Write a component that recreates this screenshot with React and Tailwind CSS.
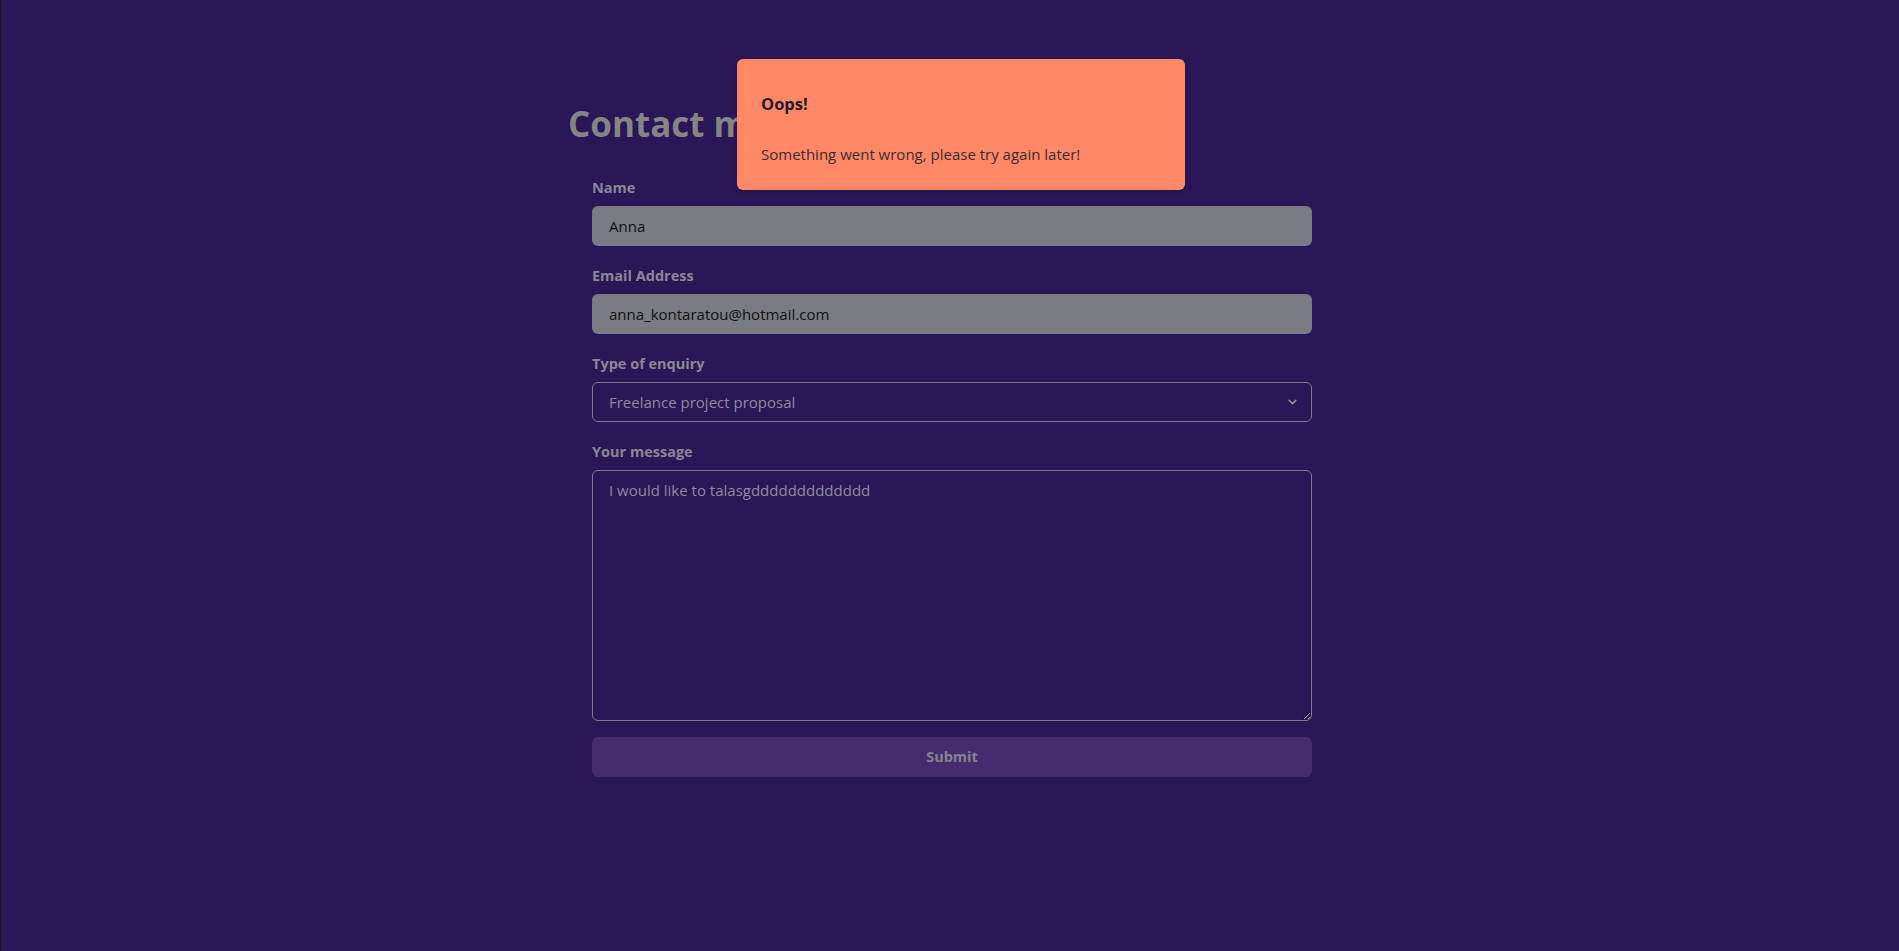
import { useState } from 'react'

const font = { fontFamily: '"Open Sans", "Noto Sans", sans-serif' }

function Toast({ title, message }) {
  return (
    <div className="absolute left-[736px] top-[59px] w-[448px] h-[131px] rounded-md bg-[#ff8966] px-6 pt-[33px] shadow-md">
      <p className="text-[16.5px] font-bold text-[#1e1b2e] leading-6">{title}</p>
      <p className="mt-[26px] text-[15px] text-[#3b2b33] leading-6">{message}</p>
    </div>
  )
}

function Field({ label, children }) {
  return (
    <div className="flex flex-col">
      <label className="mb-2 text-[14.5px] font-bold leading-5 text-[#8b8795]">{label}</label>
      {children}
    </div>
  )
}

export default function App() {
  const [name, setName] = useState('Anna')
  const [email, setEmail] = useState('anna_kontaratou@hotmail.com')
  const [kind, setKind] = useState('freelance')
  const [msg, setMsg] = useState('I would like to talasgddddddddddddd')

  return (
    <div className="relative min-h-[951px] bg-[#2a1758] border-l border-[#15121c]" style={font}>
      <div className="mx-auto w-[772px] pl-1 pt-[104px]">
        <h1 className="text-[35px] font-bold leading-10 text-[#858585] mb-[34px]">Contact me</h1>

        <form className="px-6 flex flex-col gap-5" onSubmit={e => e.preventDefault()}>
          <Field label="Name">
            <input
              value={name}
              onChange={e => setName(e.target.value)}
              className="h-10 rounded-md bg-[#7a7c83] px-[17px] text-[15px] text-[#111] outline-none"
            />
          </Field>

          <Field label="Email Address">
            <input
              value={email}
              onChange={e => setEmail(e.target.value)}
              className="h-10 rounded-md bg-[#7a7c83] px-[17px] text-[15px] text-[#111] outline-none"
            />
          </Field>

          <Field label="Type of enquiry">
            <div className="relative">
              <select
                value={kind}
                onChange={e => setKind(e.target.value)}
                className="h-10 w-full appearance-none rounded-md border border-[#7f7c8c] bg-transparent px-4 text-[15px] text-[#8f8c9c] outline-none"
              >
                <option value="freelance">Freelance project proposal</option>
                <option value="job">Job offer</option>
                <option value="other">Other</option>
              </select>
              {/* chevron */}
              <svg className="pointer-events-none absolute right-[14px] top-1/2 -translate-y-1/2" width="11" height="11" viewBox="0 0 10 10" fill="none">
                <path d="M2 3.5 5 6.5 8 3.5" stroke="#8f8c9c" strokeWidth="1.4" strokeLinecap="round" strokeLinejoin="round" />
              </svg>
            </div>
          </Field>

          <Field label="Your message">
            <textarea
              value={msg}
              onChange={e => setMsg(e.target.value)}
              spellCheck={false}
              className="h-[251px] resize-y rounded-md border border-[#7f7c8c] bg-transparent px-4 py-2 text-[15px] text-[#8f8c9c] outline-none"
            />
          </Field>

          <button
            type="submit"
            className="-mt-[4px] h-10 rounded-md bg-[#432d6e] text-[14.5px] font-bold text-[#85828f]"
          >
            Submit
          </button>
        </form>
      </div>

      <Toast title="Oops!" message="Something went wrong, please try again later!" />
    </div>
  )
}
